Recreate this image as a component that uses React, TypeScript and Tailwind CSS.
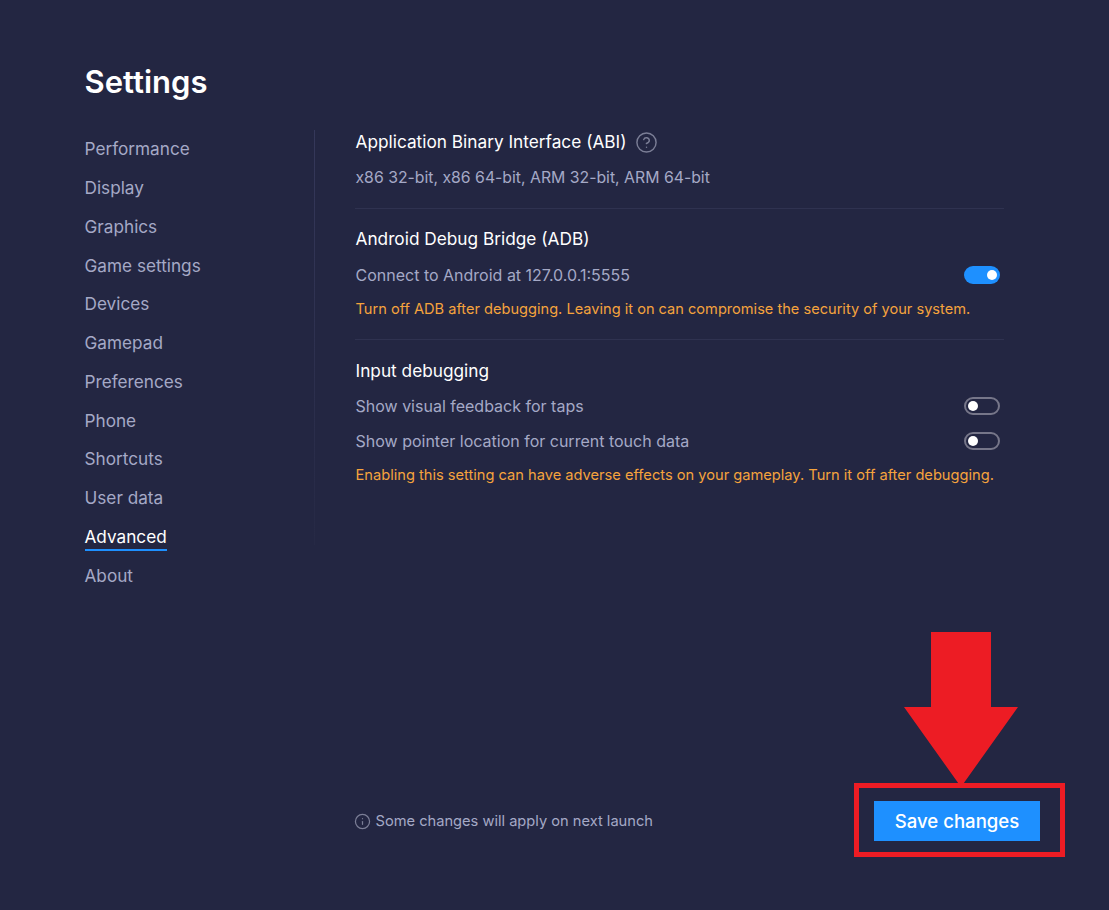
import { Info, CircleHelp } from "lucide-react";

const MENU = ["Performance", "Display", "Graphics", "Game settings", "Devices", "Gamepad", "Preferences", "Phone", "Shortcuts", "User data", "Advanced", "About"];

function Toggle({ on }: { on?: boolean }) {
  if (on) {
    return (
      <div className="flex h-[18px] w-9 items-center justify-end rounded-full bg-[#1e90ff] pr-[3px]">
        <div className="h-[10px] w-[10px] rounded-full bg-white" />
      </div>
    );
  }
  return (
    <div className="flex h-[18px] w-9 items-center rounded-full border-2 border-[#767689] pl-[2px]">
      <div className="h-[10px] w-[10px] rounded-full bg-white" />
    </div>
  );
}

export default function App() {
  return (
    <div className="relative flex h-[910px] w-[1109px] flex-col overflow-hidden bg-[#232642] pl-[84.5px] pr-[105px] font-['Inter',sans-serif]">
      <h1 className="mt-[64px] h-[36px] text-[31px] leading-[36px] font-semibold text-white">Settings</h1>

      <div className="mt-[30px] flex flex-1">
        <nav className="w-[229.5px] shrink-0">
          <ul className="flex flex-col gap-[14.75px] pt-[7.25px]">
            {MENU.map((item) => (
              <li key={item} className="h-[24px] text-[17.2px] leading-[24px]">
                <span className={item === "Advanced" ? "inline-block border-b-2 border-[#1e90ff] text-white" : "text-[#a5a9c6]"}>{item}</span>
              </li>
            ))}
          </ul>
        </nav>
        <div className="h-[415px] w-px bg-gradient-to-b from-[#35385a] via-[#2e3150] to-[#262945]" />

        <div className="ml-[40.5px] flex-1">
          <div className="flex h-[24px] items-center text-[17.25px] text-white">
            Application Binary Interface (ABI)
            <CircleHelp className="ml-[8px] h-[23px] w-[23px] text-[#7b7e96]" strokeWidth={1.5} />
          </div>
          <div className="mt-[12px] h-[24px] text-[15.8px] leading-[24px] text-[#a5a9c6]">x86 32-bit, x86 64-bit, ARM 32-bit, ARM 64-bit</div>
          <div className="mt-[18px] -ml-px border-t border-[#2f3250]" />

          <div className="mt-[18px] h-[24px] text-[17.25px] leading-[24px] text-white">Android Debug Bridge (ADB)</div>
          <div className="mt-[12px] flex h-[24px] items-center justify-between pr-[4px] text-[16px] text-[#a5a9c6]">
            <span>Connect to Android at 127.0.0.1:5555</span>
            <Toggle on />
          </div>
          <div className="mt-[10px] h-[24px] text-[14.6px] leading-[24px] whitespace-nowrap text-[#f5a33d]">Turn off ADB after debugging. Leaving it on can compromise the security of your system.</div>
          <div className="mt-[18px] -ml-px border-t border-[#2f3250]" />

          <div className="mt-[19px] h-[24px] text-[17.25px] leading-[24px] text-white">Input debugging</div>
          <div className="mt-[11px] flex h-[24px] items-center justify-between pr-[4px] text-[16px] text-[#a5a9c6]">
            <span>Show visual feedback for taps</span>
            <Toggle />
          </div>
          <div className="mt-[11px] flex h-[24px] items-center justify-between pr-[4px] text-[16px] text-[#a5a9c6]">
            <span>Show pointer location for current touch data</span>
            <Toggle />
          </div>
          <div className="mt-[10px] h-[24px] text-[14.65px] leading-[24px] whitespace-nowrap text-[#f5a33d]">Enabling this setting can have adverse effects on your gameplay. Turn it off after debugging.</div>
        </div>
      </div>

      <div className="mb-[69px] flex h-[40px] items-center justify-between pl-[269px]">
        <div className="mt-[2px] flex items-center gap-[5px] text-[14.65px] text-[#a5a9c6]">
          <Info className="h-[17px] w-[17px] text-[#7b7e96]" strokeWidth={1.75} />
          Some changes will apply on next launch
        </div>
        <button className="-mr-[36px] h-[40px] w-[166px] bg-[#1e90ff] pt-px text-[18.6px] font-medium text-white">Save changes</button>
      </div>

      {/* annotation drawn on top of the screenshot */}
      <svg className="absolute top-[632px] left-[904px]" width="114" height="155" viewBox="0 0 114 155">
        <path d="M27 0H87V75H114L57 155L0 75H27Z" fill="#ed1c24" />
      </svg>
      <div className="absolute top-[783px] left-[854px] h-[74px] w-[211px] border-[5px] border-[#ed1c24]" />
    </div>
  );
}
